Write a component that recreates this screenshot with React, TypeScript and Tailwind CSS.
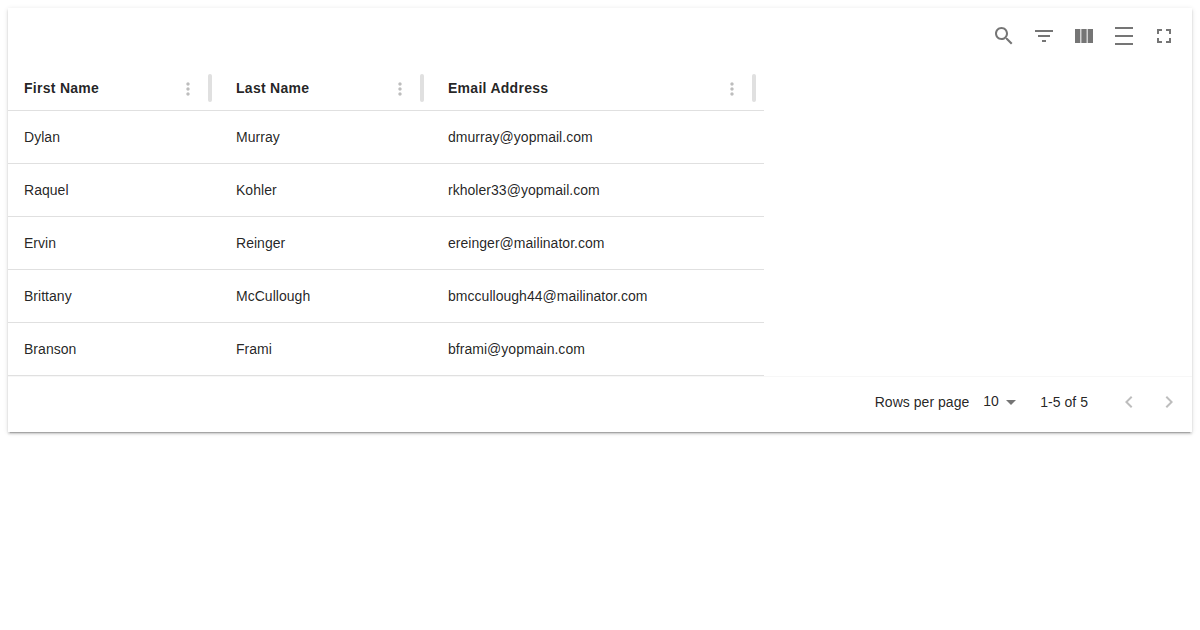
const sans = "font-['Liberation_Sans',Arial,sans-serif] tracking-[0.03px]";

const Icon = ({ d, className }: { d: string; className?: string }) => (
  <svg viewBox="0 0 24 24" className={className ?? "w-6 h-6 fill-black/[0.54]"}>
    <path d={d} />
  </svg>
);

const toolbarIcons = [
  "M15.5 14h-.79l-.28-.27C15.41 12.59 16 11.11 16 9.5 16 5.91 13.09 3 9.5 3S3 5.91 3 9.5 5.91 16 9.5 16c1.61 0 3.09-.59 4.23-1.57l.27.28v.79l5 4.99L20.49 19l-4.99-5zm-6 0C7.01 14 5 11.99 5 9.5S7.01 5 9.5 5 14 7.01 14 9.5 11.99 14 9.5 14z",
  "M10 18h4v-2h-4v2zM3 6v2h18V6H3zm3 7h12v-2H6v2z",
  "M14.67 5v14H9.33V5h5.34zm1 14H21V5h-5.33v14zm-7.34 0V5H3v14h5.33z",
  "M3 3h18v2H3zm0 16h18v2H3zm0-8h18v2H3z",
  "M7 14H5v5h5v-2H7v-3zm-2-4h2V7h3V5H5v5zm12 7h-3v2h5v-5h-2v3zM14 5v2h3v3h2V5h-5z",
];

const moreVert =
  "M12 8c1.1 0 2-.9 2-2s-.9-2-2-2-2 .9-2 2 .9 2 2 2zm0 2c-1.1 0-2 .9-2 2s.9 2 2 2 2-.9 2-2-.9-2-2-2zm0 6c-1.1 0-2 .9-2 2s.9 2 2 2 2-.9 2-2-.9-2-2-2z";

const rows = [
  ["Dylan", "Murray", "dmurray@yopmail.com"],
  ["Raquel", "Kohler", "rkholer33@yopmail.com"],
  ["Ervin", "Reinger", "ereinger@mailinator.com"],
  ["Brittany", "McCullough", "bmccullough44@mailinator.com"],
  ["Branson", "Frami", "bframi@yopmain.com"],
];

const columns = [
  { title: "First Name", width: "w-[212px]" },
  { title: "Last Name", width: "w-[212px]" },
  { title: "Email Address", width: "w-[332px]" },
];

const cellWidths = ["w-[212px]", "w-[212px]", "w-[332px]"];

const App = () => {
  return (
    <div className={`${sans} m-2 bg-white text-[14px] text-black/[0.87] shadow-[0_3px_1px_-2px_rgba(0,0,0,0.2),0_2px_2px_0_rgba(0,0,0,0.14),0_1px_5px_0_rgba(0,0,0,0.12)]`}>
      <div className="h-14 flex items-center justify-end pr-2">
        {toolbarIcons.map((d) => (
          <div key={d} className="w-10 h-10 flex items-center justify-center">
            <Icon d={d} />
          </div>
        ))}
      </div>
      <div className="w-[756px]">
        <div className="flex h-[47px] border-b border-[#e0e0e0]">
          {columns.map((col) => (
            <div key={col.title} className={`${col.width} flex items-center pl-4`}>
              <span className="font-bold tracking-[0.28px] flex-1 leading-6 mt-0.5">{col.title}</span>
              <Icon d={moreVert} className="w-5 h-5 fill-black/[0.26] mt-1" />
              <div className="w-1 h-7 bg-[#e0e0e0] rounded-sm ml-2.5 mr-2 mt-0.5" />
            </div>
          ))}
        </div>
        {rows.map((row) => (
          <div key={row[0]} className="flex h-[53px] items-center border-b border-[#e0e0e0]">
            {row.map((cell, i) => (
              <div key={cell} className={`${cellWidths[i]} pl-4`}>
                {cell}
              </div>
            ))}
          </div>
        ))}
      </div>
      <div className="h-14 flex items-center justify-end pr-[3px] pb-[5px] border-t border-black/[0.03]">
        <span>Rows per page</span>
        <div className="flex items-center ml-[14px] w-[50px]">
          <span className="leading-none -mt-[2px]">10</span>
          <svg viewBox="0 0 24 24" className="w-6 h-6 fill-black/[0.54]">
            <path d="M7 10l5 5 5-5z" />
          </svg>
        </div>
        <span className="ml-[7px]">1-5 of 5</span>
        <div className="flex ml-[21px]">
          <div className="w-10 h-10 flex items-center justify-center">
            <Icon d="M15.41 7.41 14 6l-6 6 6 6 1.41-1.41L10.83 12z" className="w-6 h-6 fill-black/[0.26]" />
          </div>
          <div className="w-10 h-10 flex items-center justify-center">
            <Icon d="M10 6 8.59 7.41 13.17 12l-4.58 4.59L10 18l6-6z" className="w-6 h-6 fill-black/[0.26]" />
          </div>
        </div>
      </div>
    </div>
  );
};

export default App;
